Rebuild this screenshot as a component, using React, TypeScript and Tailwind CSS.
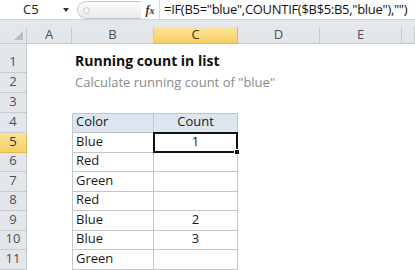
import type { ReactNode } from "react";

const font = { fontFamily: '"Open Sans", "Noto Sans", sans-serif' };

const colW = ["w-[27px]", "w-[45px]", "w-[82px]", "w-[84px]", "w-[82px]", "w-[82px]", "flex-1"];
const colLetters = ["A", "B", "C", "D", "E", ""];

type RowDef = {
  n: number;
  h: string;
  b?: string;
  c?: string;
  kind?: "title" | "sub" | "head" | "table";
};

const rows: RowDef[] = [
  { n: 1, h: "h-[29px]", b: "Running count in list", kind: "title" },
  { n: 2, h: "h-[20px]", b: 'Calculate running count of "blue"', kind: "sub" },
  { n: 3, h: "h-[20px]" },
  { n: 4, h: "h-[20px]", b: "Color", c: "Count", kind: "head" },
  { n: 5, h: "h-[20px]", b: "Blue", c: "1", kind: "table" },
  { n: 6, h: "h-[19px]", b: "Red", kind: "table" },
  { n: 7, h: "h-[20px]", b: "Green", kind: "table" },
  { n: 8, h: "h-[19px]", b: "Red", kind: "table" },
  { n: 9, h: "h-[20px]", b: "Blue", c: "2", kind: "table" },
  { n: 10, h: "h-[19px]", b: "Blue", c: "3", kind: "table" },
  { n: 11, h: "h-[20px]", b: "Green", kind: "table" },
];

function FormulaBar() {
  return (
    <div className="flex h-[19px] items-center bg-white">
      <div className="relative flex h-full w-[77px] items-center">
        <span className="pl-[23px] text-[13px] text-[#222]">C5</span>
        <span className="absolute left-[63px] top-[8px] h-0 w-0 border-x-[3.5px] border-t-[4px] border-x-transparent border-t-[#333]" />
      </div>
      <div className="flex h-[18px] w-[64px] items-center self-end rounded-l-full border border-r-0 border-[#c4c8ce] bg-gradient-to-b from-[#fbfbfb] to-[#e9ebee] pl-[5px]">
        <span className="h-[7px] w-[7px] rounded-full border border-[#c9ccd0] bg-[#f2f3f5]" />
      </div>
      <div className="flex h-full w-[18px] items-center justify-center">
        <span
          className="text-[12px] italic font-semibold text-[#333]"
          style={{ fontFamily: '"Liberation Serif", serif' }}
        >
          f<span className="text-[10px]">x</span>
        </span>
      </div>
      <div className="h-full w-px bg-[#d6d9de]" />
      <div className="flex-1 pl-[4px] text-[13px] tracking-[-0.3px] whitespace-nowrap text-[#111]">
        =IF(B5="blue",COUNTIF($B$5:B5,"blue"),"")
      </div>
    </div>
  );
}

function HeaderRow() {
  return (
    <div className="flex h-[17px]">
      <div className="relative w-[27px] border-r border-b border-[#c5cad1] bg-[#e3e7ec]">
        <span className="absolute right-[3px] bottom-[3px] h-0 w-0 border-b-[9px] border-l-[9px] border-b-[#b9bec6] border-l-transparent" />
      </div>
      {colLetters.map((l, i) => (
        <div
          key={i}
          className={`${colW[i + 1]} flex items-center justify-center border-r border-b text-[13px] ${
            l === "C"
              ? "border-[#e2b94a] bg-gradient-to-b from-[#fbe39b] to-[#f5cf62] text-[#333]"
              : "border-[#c5cad1] bg-[#e3e7ec] text-[#4a4f57]"
          }`}
        >
          {l}
        </div>
      ))}
    </div>
  );
}

function Cell({ className, children }: { className: string; children?: ReactNode }) {
  return <div className={`flex items-end pb-[1px] ${className}`}>{children}</div>;
}

function SheetRow({ r }: { r: RowDef }) {
  const isTable = r.kind === "head" || r.kind === "table";
  const tableBorder = "border-[#c6c6c6]";
  const fill = r.kind === "head" ? "bg-[#dde6f0]" : "bg-white";
  const active = r.n === 5;

  return (
    <div className={`flex ${r.h}`}>
      <div
        className={`w-[27px] flex items-end justify-center pb-[1px] border-r border-b text-[13px] ${
          active
            ? "border-[#e2b94a] bg-gradient-to-b from-[#fbe39b] to-[#f5cf62] text-[#333]"
            : "border-[#c5cad1] bg-[#e3e7ec] text-[#4a4f57]"
        }`}
      >
        {r.n}
      </div>
      <Cell className={colW[1]} />
      <Cell
        className={`${colW[2]} pl-[3px] whitespace-nowrap ${
          isTable ? `border-l border-r border-b ${tableBorder} ${fill}` : ""
        } ${r.kind === "head" ? "border-t" : ""} ${
          r.kind === "title"
            ? "text-[14px] font-bold text-[#111] pb-[2px]"
            : r.kind === "sub"
              ? "text-[13px] text-[#8a8a8a]"
              : "text-[13px] text-[#1a1a1a]"
        }`}
      >
        {r.b}
      </Cell>
      <Cell
        className={`${colW[3]} relative justify-center text-[13px] text-[#1a1a1a] ${
          isTable ? `border-r border-b ${tableBorder} ${fill}` : ""
        } ${r.kind === "head" ? "border-t" : ""}`}
      >
        {r.c}
        {active && (
          <span className="absolute z-10 -left-[1px] -top-[1px] -right-[1px] -bottom-[1px] border-2 border-[#111]">
            <span className="absolute -right-[4px] -bottom-[4px] h-[6px] w-[6px] border border-white bg-[#111]" />
          </span>
        )}
      </Cell>
      <Cell className={colW[4]} />
      <Cell className={colW[5]} />
      <Cell className={colW[6]} />
    </div>
  );
}

export default function App() {
  return (
    <div className="h-[270px] w-[415px] overflow-hidden bg-white" style={font}>
      <FormulaBar />
      <div className="h-[8px] border-t border-[#cfd3d8] bg-[#e4e7eb]" />
      <HeaderRow />
      {rows.map((r) => (
        <SheetRow key={r.n} r={r} />
      ))}
    </div>
  );
}
